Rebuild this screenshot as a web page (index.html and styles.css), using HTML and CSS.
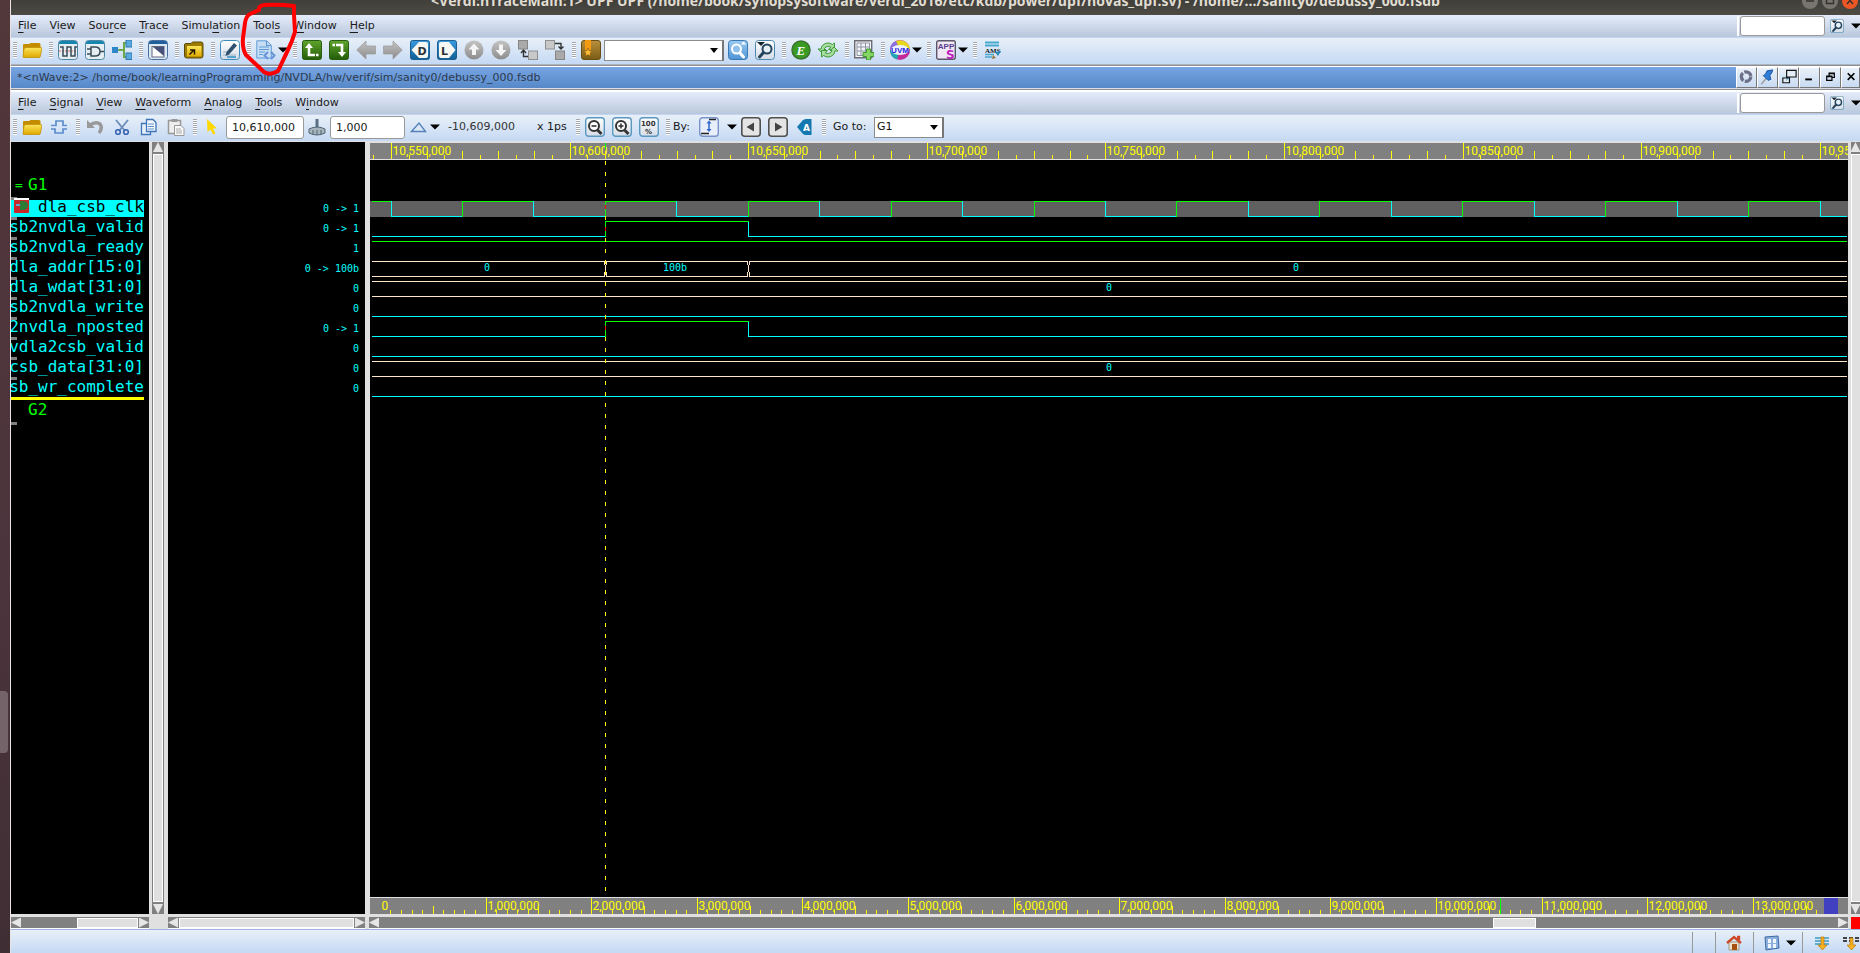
FILE: index.html
```html
<!DOCTYPE html>
<html lang="en">
<head>
<meta charset="utf-8">
<title>Verdi nWave</title>
<link rel="stylesheet" href="styles.css">
</head>
<body>
<svg class="defs" aria-hidden="true">
  <defs>
    <linearGradient id="gold" x1="0" y1="0" x2="0" y2="1"><stop offset="0" stop-color="#fbe65a"/><stop offset="1" stop-color="#e0a800"/></linearGradient>
    <linearGradient id="gray" x1="0" y1="0" x2="0" y2="1"><stop offset="0" stop-color="#c4c4c4"/><stop offset="1" stop-color="#8c8c8c"/></linearGradient>
    <linearGradient id="green" x1="0" y1="0" x2="0" y2="1"><stop offset="0" stop-color="#5fa52c"/><stop offset="1" stop-color="#245c08"/></linearGradient>
    <linearGradient id="blue" x1="0" y1="0" x2="0" y2="1"><stop offset="0" stop-color="#3a9be0"/><stop offset="1" stop-color="#0f5f94"/></linearGradient>
    <linearGradient id="brown" x1="0" y1="0" x2="0" y2="1"><stop offset="0" stop-color="#b98f3c"/><stop offset="1" stop-color="#7a5c14"/></linearGradient>
    <linearGradient id="pale" x1="0" y1="0" x2="0" y2="1"><stop offset="0" stop-color="#ffffff"/><stop offset="1" stop-color="#d4dce6"/></linearGradient>
    <linearGradient id="sky" x1="0" y1="0" x2="0" y2="1"><stop offset="0" stop-color="#9ccbf2"/><stop offset="1" stop-color="#4f93d6"/></linearGradient>
    <symbol id="folder" viewBox="0 0 20 20"><path d="M1 16V5q0-1 1-1h5l1.500-1H17q1.500 0 1.500 1.500V8H4z" fill="#c48d00"/><path d="M1 17l1-8q.3-1.500 2-1.500h15q1 0 .7 1.200L18.500 16q-.3 1.500-1.500 1.500H2q-1 0-1-.5z" fill="url(#gold)" stroke="#c39208" stroke-width=".8"/></symbol>
    <symbol id="lens" viewBox="0 0 20 20"><rect x=".5" y=".5" width="19" height="19" rx="3" fill="url(#pale)" stroke="#4b87ae"/><path d="M2 2h8L6 6z" fill="#14222e"/><circle cx="12" cy="9" r="4.500" fill="#e6f0f6" stroke="#24435c" stroke-width="2"/><path d="M8.500 12.500L4.500 17" stroke="#24435c" stroke-width="3" stroke-linecap="round"/></symbol>
    <symbol id="drop" viewBox="0 0 10 6"><path d="M0 .5h10L5 5.500z" fill="#000"/></symbol>
  </defs>
</svg>

<aside class="dock"><span class="dock-item"></span></aside>
<div class="window">
  <header class="os-title">
    <h1>&lt;Verdi:nTraceMain:1&gt; UPF UPF (/home/book/synopsysoftware/verdi_2016/etc/kdb/power/upf/novas_upf.sv) - /home/.../sanity0/debussy_000.fsdb</h1>
    <div class="os-buttons">
      <button aria-label="Minimize"><svg viewBox="0 0 16 16"><path d="M4 8h8"/></svg></button>
      <button aria-label="Maximize"><svg viewBox="0 0 16 16"><path d="M4.500 4.500h7v6h-7z"/></svg></button>
      <button aria-label="Close" class="close"><svg viewBox="0 0 16 16"><path d="M5 4l6 7M11 4l-6 7"/></svg></button>
    </div>
  </header>

  <nav class="menubar">
    <button><u>F</u>ile</button><button>V<u>i</u>ew</button><button>Sou<u>r</u>ce</button><button><u>T</u>race</button><button>Simul<u>a</u>tion</button><button>Tool<u>s</u></button><button><u>W</u>indow</button><button><u>H</u>elp</button>
    <div class="search"><input type="text" aria-label="Find command"><button aria-label="Find"><svg width="14" height="14"><use href="#lens"/></svg></button><button aria-label="Find options" class="more"><svg width="10" height="6"><use href="#drop"/></svg></button></div>
  </nav>

  <div class="toolbar">
    <i class="grip"></i>
    <button class="tool" aria-label="Open"><svg viewBox="0 0 20 20"><use href="#folder"/></svg></button>
    <i class="grip"></i>
    <button class="tool" aria-label="New waveform"><svg viewBox="0 0 20 20"><rect x=".5" y=".5" width="19" height="19" rx="3" fill="#e6eef2" stroke="#4f87a3"/><path d="M1 4V3q0-2 2-2h14q2 0 2 2v1z" fill="#1686b0"/><path d="M1 11h18" stroke="#e06a5a" stroke-dasharray="2 1"/><path d="M2 7h3v9h4V7h4v9h4V7h2" fill="none" stroke="#3a4c58" stroke-width="1.500"/></svg></button>
    <button class="tool" aria-label="New schematic"><svg viewBox="0 0 20 20"><rect x=".5" y=".5" width="19" height="19" rx="3" fill="#e6eef2" stroke="#4f87a3"/><path d="M1 4V3q0-2 2-2h14q2 0 2 2v1z" fill="#1686b0"/><path d="M6 7h4q5 0 5 4.500T10 16H6zM2 9h4M2 14h4M15 11.500h4" fill="none" stroke="#3a4c58" stroke-width="1.500"/></svg></button>
    <button class="tool" aria-label="Hierarchy"><svg viewBox="0 0 20 20"><path d="M4 10h7M16 3h-4v14h4" fill="none" stroke="#6aa84a" stroke-width="2"/><rect x="0" y="7" width="6" height="6" fill="#2f86c8"/><rect x="14" y="0" width="6" height="7" fill="#5aa9de" stroke="#2f77ae"/><rect x="14" y="13" width="6" height="6.500" fill="#5aa9de" stroke="#2f77ae"/></svg></button>
    <i class="grip"></i>
    <button class="tool" aria-label="Source window"><svg viewBox="0 0 20 20"><rect x=".5" y=".5" width="19" height="19" rx="3" fill="#dce8f4" stroke="#4a6f9c"/><path d="M1 4V3q0-2 2-2h14q2 0 2 2v1z" fill="#1f5f9c"/><rect x="4" y="6.500" width="12" height="10.500" fill="#fff" stroke="#60687c"/><path d="M5 7h11v9z" fill="#46507a"/></svg></button>
    <i class="grip"></i>
    <button class="tool" aria-label="Open session"><svg viewBox="0 0 20 20"><path d="M.5 16V5q0-1.500 1.500-1.500h5L8.500 2H17q2 0 2 2v12q0 2-2 2H3q-2.500 0-2.500-2z" fill="#9c7c00" stroke="#5c4a10"/><path d="M3 6h14.500v10.500H3z" fill="url(#gold)"/><path d="M5.500 14.500l4-4M6 10h4.500v4.500" fill="none" stroke="#201800" stroke-width="1.500"/></svg></button>
    <i class="grip"></i>
    <button class="tool" aria-label="Edit source"><svg viewBox="0 0 20 20"><rect x=".5" y=".5" width="19" height="19" rx="3" fill="url(#pale)" stroke="#3e8cba"/><path d="M3 15h13M3 12h5" stroke="#96b4c8"/><path d="M14 3l3 2.500L9 14.500 5.500 16 6.500 12z" fill="#2f4f6c"/><path d="M7 17h9" stroke="#2b8fc4" stroke-width="1.500"/></svg></button>
    <i class="grip"></i>
    <span class="split"><button class="tool" aria-label="Source code"><svg viewBox="0 0 20 20"><path d="M.8.8h10l4.500 4.500V18H.8z" fill="#c8def4" stroke="#5e9bd6"/><path d="M10.500 1v4.500H15M3 7h10M3 9.500h10M3 12h6M3 14.500h4" fill="none" stroke="#5e9bd6" stroke-width="1.200"/><path d="M12 12l-3.500 3.500L12 19M15 12l3.500 3.500L15 19" fill="none" stroke="#6794d8" stroke-width="2"/></svg></button><button class="arrow" aria-label="Source code options"><svg width="10" height="6"><use href="#drop"/></svg></button></span>
    <i class="grip"></i>
    <button class="tool" aria-label="Scope up"><svg viewBox="0 0 20 20"><rect x=".5" y=".5" width="19" height="19" rx="2" fill="url(#green)" stroke="#285c10"/><path d="M7 7v8h6" fill="none" stroke="#fff" stroke-width="2.600"/><path d="M3 8l4-5 4 5zM14 13.700h2.500v2.600H14z" fill="#fff"/></svg></button>
    <button class="tool" aria-label="Scope down"><svg viewBox="0 0 20 20"><rect x=".5" y=".5" width="19" height="19" rx="2" fill="url(#green)" stroke="#285c10"/><path d="M7 5h6v8" fill="none" stroke="#fff" stroke-width="2.600"/><path d="M9 12h8l-4 5zM3.500 3.700H6v2.600H3.500z" fill="#fff"/></svg></button>
    <button class="tool" aria-label="Back"><svg viewBox="0 0 20 20"><path d="M.7 10L10 1v5h9.500v8H10v5z" fill="url(#gray)" stroke="#999" stroke-width=".7"/></svg></button>
    <button class="tool" aria-label="Forward"><svg viewBox="0 0 20 20"><path d="M19.300 10L10 1v5H.5v8H10v5z" fill="url(#gray)" stroke="#999" stroke-width=".7"/></svg></button>
    <button class="tool" aria-label="Driver"><svg viewBox="0 0 20 20"><rect x=".5" y=".5" width="19" height="19" rx="2" fill="url(#blue)" stroke="#1c5e90"/><path d="M1.500 10L9 2h7q2 0 2 2v12q0 2-2 2H9z" fill="#f6f6f2"/><text x="7.500" y="14.500" class="glyph dark">D</text></svg></button>
    <button class="tool" aria-label="Load"><svg viewBox="0 0 20 20"><rect x=".5" y=".5" width="19" height="19" rx="2" fill="url(#blue)" stroke="#1c5e90"/><path d="M18.500 10L12 2H4Q2 2 2 4v12q0 2 2 2h8z" fill="#f6f6f2"/><text x="4" y="14.500" class="glyph dark">L</text></svg></button>
    <button class="tool" aria-label="Previous"><svg viewBox="0 0 20 20"><circle cx="10" cy="10" r="9.500" fill="url(#gray)"/><path d="M10 3.500l5.500 6H12V15H8V9.500H4.500z" fill="#f4f4f4"/></svg></button>
    <button class="tool" aria-label="Next"><svg viewBox="0 0 20 20"><circle cx="10" cy="10" r="9.500" fill="url(#gray)"/><path d="M10 16l5.500-6H12V4.500H8V10H4.500z" fill="#f4f4f4"/></svg></button>
    <button class="tool" aria-label="Fan in"><svg viewBox="0 0 20 20"><rect x=".5" y=".5" width="9" height="8.500" fill="#aaa" stroke="#858585"/><rect x="10.500" y="11" width="9" height="8.500" fill="#c8c8c8" stroke="#909090"/><path d="M10 16.500H5.500V11M3 13l2.500-3L8 13" fill="none" stroke="#333" stroke-width="1.400"/></svg></button>
    <button class="tool" aria-label="Fan out"><svg viewBox="0 0 20 20"><rect x=".5" y=".5" width="9" height="8.500" fill="#c8c8c8" stroke="#909090"/><rect x="10.500" y="11" width="9" height="8.500" fill="#aaa" stroke="#858585"/><path d="M10 3.500h6V9M13.500 6.500L16 9l2.500-2.500" fill="none" stroke="#333" stroke-width="1.400"/></svg></button>
    <i class="grip"></i>
    <button class="tool" aria-label="Bookmark"><svg viewBox="0 0 20 20"><rect x=".5" y=".5" width="19" height="19" rx="2.500" fill="url(#brown)" stroke="#684e14"/><path d="M4 0h6v10H4z" fill="#f39a12"/><path d="M7 8l1.300 2.800 3 .3-2.200 2.100.6 3L7 14.700l-2.700 1.500.6-3-2.200-2.100 3-.3z" fill="#ffbd38" stroke="#7a5008" stroke-width=".6"/></svg></button>
    <span class="combo wide"><select aria-label="Find text"><option></option></select></span>
    <button class="tool" aria-label="Search"><svg viewBox="0 0 20 20"><rect x=".5" y=".5" width="19" height="19" rx="3" fill="url(#sky)" stroke="#3a78b4"/><circle cx="8.500" cy="9" r="4.500" fill="#8fc0ec" stroke="#fff" stroke-width="2"/><path d="M12 13l3.500 4" stroke="#fff" stroke-width="3" stroke-linecap="round"/><path d="M13 4.500l2.500-3L18 4.500z" fill="#fff"/></svg></button>
    <button class="tool" aria-label="Search options"><svg viewBox="0 0 20 20"><use href="#lens"/></svg></button>
    <i class="grip"></i>
    <button class="tool" aria-label="Evaluate"><svg viewBox="0 0 20 20"><circle cx="10" cy="10" r="9" fill="#3b9a22" stroke="#3b7230" stroke-width="1.500"/><text x="5.500" y="15" class="glyph serif">E</text></svg></button>
    <button class="tool" aria-label="Reload"><svg viewBox="0 0 20 20"><path d="M3 9a7 6.500 0 0 1 11.500-4.500L16.500 3v6.500h-6L12.700 7A4.500 4 0 0 0 6 9.500H8L4 13 0 9z" fill="#a8dca0" stroke="#3f9a38"/><path d="M17 11a7 6.500 0 0 1-11.500 4.500L3.500 17v-6.500h6L7.300 13a4.500 4 0 0 0 6.700-2.500h-2L16 7l4 4z" fill="#a8dca0" stroke="#3f9a38"/></svg></button>
    <i class="grip"></i>
    <button class="tool" aria-label="Add table"><svg viewBox="0 0 20 20"><path d="M.7.7h17v17H.7z" fill="#f4f4f6" stroke="#6c6c74" stroke-width="1.400"/><path d="M3 3h12.500v12.500H3zM7 3v12M11.500 3v12M3 7h12M3 11h12" fill="none" stroke="#8c94a4"/><path d="M12.500 9h4v3.500H20v4h-3.500V20h-4v-3.500H9v-4h3.500z" fill="#86d462" stroke="#3c9a30"/></svg></button>
    <i class="grip"></i>
    <span class="split"><button class="tool" aria-label="UVM"><svg viewBox="0 0 20 20"><circle cx="10" cy="10" r="10" fill="#c42a9a"/><path d="M0 10A10 10 0 0 1 6 1l4 9z" fill="#8c70e0"/><path d="M6 1a10 10 0 0 1 14 8L10 10z" fill="#e6d81c"/><path d="M0 10a10 10 0 0 0 7 9.500L10 10z" fill="#20a8b0"/><ellipse cx="10" cy="10" rx="9" ry="5" fill="#eef0ff"/><text x="10" y="13" text-anchor="middle" class="glyph uvm">UVM</text></svg></button><button class="arrow" aria-label="UVM options"><svg width="10" height="6"><use href="#drop"/></svg></button></span>
    <i class="grip"></i>
    <span class="split"><button class="tool" aria-label="Apps"><svg viewBox="0 0 20 20"><rect x=".7" y=".7" width="18.600" height="18.600" rx="2" fill="#eee8f4" stroke="#5c5468" stroke-width="1.400"/><text x="10" y="8.500" text-anchor="middle" class="glyph apps">APP</text><text x="10" y="18.500" class="glyph s">S</text></svg></button><button class="arrow" aria-label="Apps options"><svg width="10" height="6"><use href="#drop"/></svg></button></span>
    <i class="grip"></i>
    <button class="tool" aria-label="AMS"><svg viewBox="0 0 20 20"><path d="M3 2.500h14M3 5.500h14" stroke="#49a8d0" stroke-width="2"/><path d="M3 14.500h9M3 17h7" stroke="#49a8d0" stroke-width="1.500"/><text x="3" y="12.500" class="glyph ams">AMS</text><path d="M13 12l6-1-3 5z" fill="#2a88b8"/><path d="M11 15l3 3-4 1z" fill="#a07038"/></svg></button>
  </div>

  <div class="sub-title">
    <h2>*&lt;nWave:2&gt; /home/book/learningProgramming/NVDLA/hw/verif/sim/sanity0/debussy_000.fsdb</h2>
    <div class="sub-buttons">
      <button aria-label="Sync"><svg viewBox="0 0 20 20"><circle cx="9" cy="9" r="5" fill="none" stroke="#6c7088" stroke-width="3.500" stroke-dasharray="9 1.500"/></svg></button>
      <button aria-label="Pin"><svg viewBox="0 0 20 20"><path d="M3 17l5-6" stroke="#999" stroke-width="1.500"/><path d="M9 3l6-1-1 3-2 3 1 4-3 1-5-5 2-1z" fill="#2f7cd8" stroke="#1a54a0"/></svg></button>
      <button aria-label="Undock"><svg viewBox="0 0 20 20"><path d="M3 8h9v8H3z" fill="#c4e0f4"/><path d="M7.500 2.500h10v7h-10zM3.500 10.500h7v5h-7z" fill="#e4edf6" stroke="#111" stroke-width="1.200"/><path d="M7 13l3-3" stroke="#2080c0"/></svg></button>
      <button aria-label="Minimize window"><svg viewBox="0 0 20 20"><path d="M5 12h7" stroke="#000" stroke-width="2"/></svg></button>
      <button aria-label="Restore window"><svg viewBox="0 0 20 20"><path d="M8 8V5.500h5.500V10H11M5.500 8.500H11V13H5.500zM8 6h6M5.500 9H11" fill="none" stroke="#000" stroke-width="1.300"/></svg></button>
      <button aria-label="Close window"><svg viewBox="0 0 20 20"><path d="M5.500 5.500l7 7M12.500 5.500l-7 7" stroke="#000" stroke-width="1.700"/></svg></button>
    </div>
  </div>

  <nav class="menubar">
    <button><u>F</u>ile</button><button><u>S</u>ignal</button><button><u>V</u>iew</button><button><u>W</u>aveform</button><button><u>A</u>nalog</button><button><u>T</u>ools</button><button>W<u>i</u>ndow</button>
    <div class="search"><input type="text" aria-label="Find wave command"><button aria-label="Find"><svg width="14" height="14"><use href="#lens"/></svg></button><button aria-label="Find options" class="more"><svg width="10" height="6"><use href="#drop"/></svg></button></div>
  </nav>

  <div class="toolbar wave-tools">
    <i class="grip"></i>
    <button class="tool" aria-label="Open"><svg viewBox="0 0 20 20"><use href="#folder"/></svg></button>
    <button class="tool" aria-label="Get signals"><svg viewBox="0 0 20 20"><path d="M2 8.500h5V4h7v4.500h4M2 12h4v4h8v-4h4" fill="none" stroke="#5c8ccc" stroke-width="1.700"/><path d="M2 10h16" fill="none" stroke="#d4e4f8"/></svg></button>
    <i class="grip"></i>
    <button class="tool" aria-label="Undo"><svg viewBox="0 0 20 20"><path d="M5 8q6-4 10-1 3 4-1 9" fill="none" stroke="#999" stroke-width="3.500"/><path d="M2 3v8h8z" fill="#999"/></svg></button>
    <button class="tool" aria-label="Cut"><svg viewBox="0 0 20 20" fill="none"><path d="M4 3l9 11M16 3L7 14" stroke="#6a8cb8" stroke-width="1.800"/><circle cx="6" cy="15" r="2.300" stroke="#3864b0" stroke-width="1.600"/><circle cx="14" cy="15" r="2.300" stroke="#3864b0" stroke-width="1.600"/></svg></button>
    <button class="tool" aria-label="Copy"><svg viewBox="0 0 20 20"><path d="M2.500 6.500h9v11h-9z" fill="#e8f1fa" stroke="#3e74b8" stroke-width="1.300"/><path d="M7.500 2.500H14l3 3v9H7.500z" fill="#f4f8fc" stroke="#3e74b8" stroke-width="1.300"/><path d="M9 7h6M9 9.500h6M9 12h6" stroke="#5c90cc"/></svg></button>
    <button class="tool" aria-label="Paste"><svg viewBox="0 0 20 20"><path d="M2.500 3.500h12v13h-12z" fill="#eee" stroke="#999" stroke-width="1.500"/><path d="M5.500 2h6v3h-6z" fill="#999"/><path d="M8.500 8.500H15l3 3v7H8.500z" fill="#fafafa" stroke="#999"/><path d="M10 12h5M10 14h6M10 16h6" stroke="#aaa"/></svg></button>
    <i class="grip"></i>
    <button class="tool" aria-label="Select"><svg viewBox="0 0 20 20"><path d="M5 2l10 9.500h-4l2.500 5-2.500 1-2.500-5L5.500 15z" fill="#ffd800"/></svg></button>
    <input class="field" type="text" aria-label="Cursor time" value="10,610,000">
    <button class="tool key" aria-label="Marker"><svg viewBox="0 0 20 20"><path d="M10 2v9" stroke="#5a7082" stroke-width="3"/><path d="M2 12q8-4 16 0v4q-8 4-16 0z" fill="#a8b4bc" stroke="#506474"/><path d="M6 13v4M10 13v5M14 13v4" stroke="#506474"/></svg></button>
    <input class="field" type="text" aria-label="Marker time" value="1,000">
    <button class="tool tri" aria-label="Delta"><svg viewBox="0 0 20 20"><path d="M3.500 14.500L11 6l6.500 8.500z" fill="#dce8f6" stroke="#5480b8" stroke-width="1.400"/></svg></button>
    <button class="arrow" aria-label="Delta options"><svg width="10" height="6"><use href="#drop"/></svg></button>
    <output class="delta">-10,609,000</output>
    <span class="unit">x 1ps</span>
    <i class="grip"></i>
    <button class="tool" aria-label="Zoom out"><svg viewBox="0 0 20 20"><rect x=".7" y=".7" width="18.600" height="18.600" rx="3" fill="url(#pale)" stroke="#5a98c0" stroke-width="1.400"/><circle cx="9" cy="9" r="5" fill="#fff" stroke="#333" stroke-width="2"/><path d="M6.500 9h5" stroke="#333" stroke-width="1.600"/><path d="M12.500 13l4 4" stroke="#333" stroke-width="3"/></svg></button>
    <button class="tool" aria-label="Zoom in"><svg viewBox="0 0 20 20"><rect x=".7" y=".7" width="18.600" height="18.600" rx="3" fill="url(#pale)" stroke="#5a98c0" stroke-width="1.400"/><circle cx="9" cy="9" r="5" fill="#fff" stroke="#333" stroke-width="2"/><path d="M6.500 9h5M9 6.500v5" stroke="#333" stroke-width="1.600"/><path d="M12.500 13l4 4" stroke="#333" stroke-width="3"/></svg></button>
    <button class="tool" aria-label="Zoom all"><svg viewBox="0 0 20 20"><rect x=".7" y=".7" width="18.600" height="18.600" rx="3" fill="url(#pale)" stroke="#5a98c0" stroke-width="1.400"/><text x="2" y="9" class="glyph small">100</text><text x="6" y="17" class="glyph small">%</text></svg></button>
    <i class="grip by-grip"></i>
    <span class="by">By:</span>
    <button class="tool" aria-label="Search by any edge"><svg viewBox="0 0 20 20"><rect x=".7" y=".7" width="18.600" height="18.600" rx="3" fill="#e8effa" stroke="#7a94c8" stroke-width="1.400"/><path d="M10 2.500h7M2 16.500h8" stroke="#222" stroke-width="1.600"/><path d="M10 5v9" stroke="#2c64d0" stroke-width="1.500"/><path d="M7.500 6.500L10 3.500l2.500 3zM7.500 12l2.500 3 2.500-3z" fill="#2c64d0"/></svg></button>
    <button class="arrow" aria-label="Edge options"><svg width="10" height="6"><use href="#drop"/></svg></button>
    <button class="tool" aria-label="Search backward"><svg viewBox="0 0 20 20"><rect x=".8" y=".8" width="18.400" height="18.400" rx="3" fill="#e4e4e4" stroke="#505050" stroke-width="1.600"/><path d="M5.500 10L13 5.500v9z" fill="#444"/></svg></button>
    <button class="tool" aria-label="Search forward"><svg viewBox="0 0 20 20"><rect x=".8" y=".8" width="18.400" height="18.400" rx="3" fill="#e4e4e4" stroke="#505050" stroke-width="1.600"/><path d="M14.500 10L7 5.500v9z" fill="#444"/></svg></button>
    <button class="tool" aria-label="Annotate"><svg viewBox="0 0 20 20"><path d="M2 10L7.500 3.500Q9 2 11 2h5.500v16H11q-2 0-3.500-1.500z" fill="#1478b0"/><text x="8" y="13.500" class="glyph white">A</text></svg></button>
    <i class="grip"></i>
    <label class="goto" for="group">Go to:</label>
    <span class="combo"><select id="group"><option>G1</option></select></span>
  </div>

  <main class="workspace">
    <section class="names">
      <div class="group"><span class="eq">=</span>G1</div>
      <ul>
        <li class="picked"><svg viewBox="0 0 15 15"><rect width="15" height="15" rx="1" fill="#c8282c"/><path d="M0 0h15v2H0z" fill="#fff"/><path d="M2 7h4" stroke="#4cf" stroke-width="1.500"/><path d="M6 3h4q4 1 4 4.500T10 12H6z" fill="#2c7c38"/></svg>dla_csb_clk</li>
        <li>sb2nvdla_valid</li><li>sb2nvdla_ready</li><li>dla_addr[15:0]</li><li>dla_wdat[31:0]</li><li>sb2nvdla_write</li><li>2nvdla_nposted</li><li>vdla2csb_valid</li><li>csb_data[31:0]</li><li>sb_wr_complete</li>
      </ul>
      <div class="insert"></div>
      <div class="group second">G2</div>
    </section>
    <div class="vscroll first"><i class="up"></i><b></b><i class="down"></i></div>
    <section class="values">
      <ul><li>0 -&gt; 1</li><li>0 -&gt; 1</li><li>1</li><li>0 -&gt; 100b</li><li>0</li><li>0</li><li>0 -&gt; 1</li><li>0</li><li>0</li><li>0</li></ul>
    </section>
    <section class="wave">
      <svg class="ruler" id="ruler"></svg>
      <svg class="plot" id="plot"></svg>
      <svg class="ruler" id="overview"></svg>
    </section>
    <div class="vscroll last"><i class="up"></i><b></b><i class="down"></i></div>
    <div class="hscroll h1"><i class="left"></i><b></b><i class="right"></i></div>
    <div class="hscroll h2"><i class="left"></i><b></b><i class="right"></i></div>
    <div class="hscroll h3"><i class="left"></i><span><b></b></span><i class="right"></i></div>
    <div class="stop"></div>
  </main>

  <footer class="status">
    <span class="cell blank"></span>
    <span class="cell home"><button aria-label="Home"><svg viewBox="0 0 16 16"><path d="M3 7h10v8H3z" fill="#ece0cc" stroke="#998"/><path d="M6 9h5v6H6z" fill="#a85010"/><path d="M1 8l7-6 7 6M11 2h2v3" fill="none" stroke="#cc4a28" stroke-width="2.400"/></svg></button></span>
    <span class="cell layout"><button aria-label="Layout"><svg viewBox="0 0 16 16"><path d="M1 2l13-1 1 12-13 2z" fill="#8cb0dc" stroke="#3c68a4"/><path d="M4 4h3v4H4zM9 4h3v4H9zM4 9h3v4H4zM9 9h3v4H9z" fill="#f0f6fc"/></svg></button><button aria-label="Layout options"><svg class="caret" viewBox="0 0 10 6"><use href="#drop"/></svg></button></span>
    <span class="cell marks"><button aria-label="Next message"><svg viewBox="0 0 16 16"><path d="M1 3h14M1 6h14M1 9h14" stroke="#3c9cc4" stroke-width="1.600"/><path d="M7 2h3v8h3l-4.500 5L4 10h3z" fill="#f6b020" stroke="#b87808" stroke-width=".7"/></svg></button><button aria-label="Last message"><svg viewBox="0 0 16 16"><path d="M0 3h16M0 6h16" stroke="#444" stroke-width="2" stroke-dasharray="4 2"/><path d="M7 3h3v7h3l-4.500 5L4 10h3z" fill="#f6b020" stroke="#b87808" stroke-width=".7"/></svg></button></span>
  </footer>
</div>
<svg class="ink" viewBox="0 0 60 76" aria-hidden="true"><path d="M24 5Q38 4 54 6L54 15 55 32Q52 42 47 52L38 71Q30 76 24 72L6 55Q2 48 3 38L5 23Q6 16 10 14L19 10Q18 6 24 5"/></svg>
<script src="app.js"></script>
</body>
</html>
```
FILE: styles.css
```css
* { box-sizing: border-box; }
body { margin: 0; height: 100vh; display: flex; overflow: hidden; background: #e0e0e0; color: #1a1a1a; font: 11px/14px "DejaVu Sans", sans-serif; }
button, input, select { font: inherit; color: inherit; border: 0; padding: 0; margin: 0; background: none; }
ul { list-style: none; margin: 0; padding: 0; }
h1, h2 { margin: 0; font-size: inherit; font-weight: inherit; white-space: nowrap; }
.defs { position: absolute; width: 0; height: 0; }

.dock { flex: none; width: 10px; background: linear-gradient(#52373b, #4c343c 60%, #3f2e34); display: flex; flex-direction: column; }
.dock-item { width: 8px; height: 62px; margin-top: 691px; background: #75636a; border-radius: 0 4px 4px 0; }
.window { flex: 1; min-width: 0; display: flex; flex-direction: column; border-left: 1px solid #e8e4e4; }

.os-title { flex: none; height: 15px; background: linear-gradient(#403f3a, #4c4a43); display: flex; justify-content: center; position: relative; color: #e0ddd2; overflow: hidden; }
.os-title h1 { font: bold 14px/15px "Open Sans", sans-serif; margin-top: -7px; }
.os-buttons { position: absolute; right: 2px; top: -7px; display: flex; gap: 4px; }
.os-buttons button { width: 16px; height: 16px; border-radius: 8px; background: #77756d; }
.os-buttons .close { background: #ea5724; }
.os-buttons svg { display: block; fill: none; stroke: #33322e; stroke-width: 1.500; }

.menubar { flex: none; height: 22px; padding-left: 7px; display: flex; align-items: center; gap: 13px; background: linear-gradient(#e4ecfb, #b9c7db); }
.menubar u { text-underline-offset: 3px; }
.search { margin-left: auto; display: flex; align-items: center; gap: 5px; border-left: 2px solid #fff; padding-left: 1px; }
.search input { width: 85px; height: 20px; background: #fff; border: 1px solid #999; border-radius: 3px; }
.search svg { display: block; }
.search .more { width: 9px; margin-left: 2px; overflow: hidden; }

.toolbar { flex: none; height: 30px; padding: 0 0 5px 2px; display: flex; align-items: center; background: linear-gradient(#e8f0f8, #c5d9f4 26px, #8f8f8f 27px, #8f8f8f 28px, #fff 28px); border-top: 1px solid #c4d4f0; }
.grip { flex: none; width: 4px; height: 16px; margin-right: 5px; background: repeating-linear-gradient(#a4a8ae 0 1px, #fff 1px 2px); }
.tool { flex: none; width: 20px; height: 20px; margin-right: 7px; }
.tool svg { display: block; width: 20px; height: 20px; }
.split { display: flex; align-items: center; margin-right: 5px; }
.split .tool { margin-right: 2px; }
.arrow { width: 10px; }
.arrow svg { display: block; }
.combo { flex: none; width: 70px; height: 21px; border: 1px solid #8c8c8c; border-right: 2px solid #777; background: #fff; position: relative; }
.combo::after { content: ""; position: absolute; right: 4px; top: 7px; border: 4px solid transparent; border-top: 5px solid #000; border-bottom: 0; }
.combo select { width: 100%; height: 100%; appearance: none; padding-left: 2px; color: #111; }
.combo.wide { width: 120px; margin: 0 4px 0 -4px; }

.glyph { font: bold 11px "DejaVu Sans", sans-serif; }
.dark { fill: #2a3238; }
.serif { font: italic bold 13px "Liberation Serif", serif; fill: #fff; }
.uvm { font: bold 8px "Liberation Sans", sans-serif; fill: #2424e0; }
.apps { font: bold 8px "Liberation Sans", sans-serif; fill: #5c3c8c; }
.s { font-size: 12px; fill: #c01cc0; }
.ams { font: bold 7px "Liberation Serif", serif; fill: #102028; }
.small { font-size: 7px; fill: #333; }
.white { font-size: 9px; fill: #fff; }

.sub-title { flex: none; height: 25px; display: flex; align-items: flex-start; justify-content: space-between; background: linear-gradient(#78a5e4, #5688c8 21px, #d8dce4 21px, #d8dce4 22px, #8f8f8f 22px, #8f8f8f 23px, #fff 23px); color: #2c3a4c; }
.sub-title h2 { padding-left: 6px; line-height: 21px; }
.sub-buttons { display: flex; }
.sub-buttons button { width: 21px; height: 21px; background: linear-gradient(#eaf1f9, #c8daf2); border: 1px solid #fff; border-right: 1px solid #777; border-bottom: 1px solid #777; }
.sub-buttons button:last-child { width: 19px; }
.sub-buttons svg { display: block; width: 20px; height: 19px; }

.wave-tools { height: 27px; padding-bottom: 2px; background: linear-gradient(#e8f0f8, #c5d9f4); }
.field { width: 78px; height: 23px; margin: 0 3px 0 -3px; padding: 0 5px; background: #fff; border: 1px solid #999; border-radius: 3px; }
.key + .field { width: 75px; }
.key { margin-right: 6px; }
.tri { margin-right: 2px; }
.delta { margin-left: 4px; width: 89px; color: #333; }
.unit { width: 39px; }
.by-grip { margin-right: 3px; }
.by { width: 26px; }
.wave-tools .arrow { margin-right: 4px; }
.by + .tool { margin-right: 8px; }
.goto { width: 43px; padding-left: 2px; white-space: nowrap; }

.workspace { flex: 1; min-height: 0; padding-top: 1px; display: grid; grid-template-columns: 138px 19px 197px minmax(0, 1fr) 12px; grid-template-rows: minmax(0, 1fr) 12px; row-gap: 3px; background: #e0e0e0; }
.names, .values { background: #000; overflow: hidden; }
.names { padding-top: 33px; color: #0ff; font: 16px/20px "DejaVu Sans Mono", monospace; }
.group { position: relative; height: 20px; margin-bottom: 2px; padding-left: 17px; color: #0f0; }
.eq { position: absolute; left: 4px; font-size: 13px; }
.names li { position: relative; height: 20px; margin-right: 5px; display: flex; justify-content: flex-end; white-space: nowrap; }
.names li::before, .second::after { content: ""; position: absolute; left: 0; top: 0; width: 6px; height: 3px; background: #808080; }
.names .picked { color: #000; background: linear-gradient(#000 3px, #0ff 3px); }
.picked svg { position: absolute; left: 3px; top: 1px; width: 15px; height: 15px; }
.insert { width: 133px; height: 3px; background: #ff0; }
.second::after { top: 22px; }
.values { padding: 57px 6px 0 0; color: #0ff; font: 10px/20px "DejaVu Sans Mono", monospace; text-align: right; }

.wave { margin-left: 5px; display: flex; flex-direction: column; background: #000; border-top: 1px solid #e0e0e0; overflow: hidden; }
.ruler { flex: none; display: block; width: 100%; height: 17px; background: #808080; border-bottom: 1px solid #e0e0e0; overflow: hidden; }
#overview { border-bottom: 0; border-top: 1px solid #e0e0e0; }
.plot { flex: 1; min-height: 0; display: block; width: 100%; }
.ruler text { font: 12px Roboto, sans-serif; fill: #ff0; }
.plot text { font: 10px "DejaVu Sans Mono", monospace; fill: #0ff; }

.vscroll { display: flex; flex-direction: column; align-items: center; background: #808080; width: 12px; }
.first { margin-left: 3px; }
.last { margin-left: 3px; width: 9px; overflow: hidden; }
.vscroll b { flex: 1; width: 10px; margin: 2px 0; background: #e0e0e0; border: 1px solid #fff; }
.vscroll i, .hscroll i { flex: none; width: 10px; height: 10px; background: #e6e6e6; }
.up { clip-path: polygon(50% 0, 100% 100%, 0 100%); }
.down { clip-path: polygon(0 0, 100% 0, 50% 100%); }
.left { clip-path: polygon(0 50%, 100% 0, 100% 100%); }
.right { clip-path: polygon(0 0, 100% 50%, 0 100%); }
.hscroll { display: flex; align-items: center; background: #808080; border-bottom: 1px solid #fff; }
.hscroll b { display: block; height: 10px; background: #e0e0e0; border: 1px solid #fff; }
.h1 b { width: 61px; margin: 0 1px 0 auto; }
.h2 { grid-column: 3; }
.h2 b { flex: 1; margin: 0 1px; }
.h3 { margin-left: 4px; }
.h3 span { flex: 1; padding-left: 75.3%; }
.h3 b { width: 43px; }
.stop { margin-left: 3px; background: #f00; }

.status { flex: none; height: 24px; display: flex; justify-content: flex-end; align-items: stretch; padding-top: 2px; background: linear-gradient(#e8f0f8, #c5d9f4); border-top: 1px solid #9cb4e4; }
.cell { display: flex; align-items: center; border-left: 1px solid #999; }
.cell svg { display: block; width: 16px; height: 16px; }
.cell .caret { width: 10px; height: 6px; }
.blank { width: 23px; }
.home { width: 38px; padding-left: 10px; }
.layout { width: 49px; padding-left: 10px; gap: 6px; }
.marks { width: 58px; padding-left: 11px; gap: 13px; }

.ink { position: absolute; left: 240px; top: 0; width: 60px; height: 76px; fill: none; stroke: #f00; stroke-width: 4; stroke-linejoin: round; pointer-events: none; }
```
FILE: app.js
```js
const NS = 'http://www.w3.org/2000/svg';
const add = (svg, tag, attrs, text) => {
  const el = document.createElementNS(NS, tag);
  for (const key in attrs) el.setAttribute(key, attrs[key]);
  if (text) el.textContent = text;
  svg.appendChild(el);
};
const line = (svg, d, color, extra) =>
  add(svg, 'path', Object.assign({ d, fill: 'none', stroke: color, 'shape-rendering': 'crispEdges' }, extra));
const GREEN = '#0f0', CYAN = '#0ff', BUS = '#ffe4c8', YELLOW = '#ff0';

function drawRuler(svg, origin, step, start, unit) {
  const width = svg.clientWidth;
  for (let i = -10; origin + i * step / 10 < width; i++) {
    const x = Math.floor(origin + i * step / 10) + 0.5;
    if (x < 0) continue;
    const kind = ((i % 10) + 10) % 10;
    const medium = unit < 1000000 ? kind % 2 === 0 : kind === 5;
    if (kind || start + i / 10 * unit > 0) {
      line(svg, `M${x} 16V${kind === 0 ? 0 : medium ? 8 : 12}`, YELLOW);
    }
    if (kind === 0) {
      const value = start + i / 10 * unit;
      if (value >= 0) add(svg, 'text', { x: x + 1, y: 12 }, value.toLocaleString('en-US'));
    }
  }
}

function drawPlot(svg) {
  const w = svg.clientWidth, h = svg.clientHeight;
  const cursor = 235.5, end = 378.5, half = 71.45;
  add(svg, 'rect', { x: 0, y: 41, width: w, height: 16, fill: '#606060' });
  line(svg, 'M2 41.5H21.5', GREEN);
  for (let i = 0; 21 + i * half < w; i++) {
    const a = Math.floor(21 + i * half) + 0.5;
    const b = Math.min(Math.floor(21 + (i + 1) * half) + 0.5, w - 1);
    line(svg, i % 2 ? `M${a} 57V41.5H${b}` : `M${a} 41V56.500H${b}`, i % 2 ? GREEN : CYAN);
  }
  for (const low of [76.5, 176.5]) {
    line(svg, `M2 ${low}H${cursor}M${end} ${low - 15}V${low}H${w - 1}`, CYAN);
    line(svg, `M${cursor} ${low}V${low - 15}H${end}`, GREEN);
  }
  line(svg, `M2 81.500H${w - 1}`, GREEN);
  for (const y of [101.5, 116.5, 121.5, 136.5, 201.5, 216.5]) line(svg, `M2 ${y}H${w - 1}`, BUS);
  for (const y of [156.5, 196.5, 236.5]) line(svg, `M2 ${y}H${w - 1}`, CYAN);
  for (const x of [cursor, end]) {
    add(svg, 'rect', { x: x - 1, y: 101, width: 2, height: 16, fill: '#000' });
    line(svg, `M${x - 1} 101V105M${x + 1} 101V105M${x} 105V112M${x - 1} 112V117M${x + 1} 112V117`, BUS);
  }
  line(svg, `M${cursor} 1V${h - 5}`, YELLOW, { 'stroke-dasharray': '4 7' });
  for (const y of [45, 67, 166]) line(svg, `M${cursor} ${y}v4`, '#f00');
  const label = (x, y, t) => add(svg, 'text', { x, y, 'text-anchor': 'middle' }, t);
  label(117, 111, '0'); label(305, 111, '100b'); label('62.650%', 111, '0');
  label('50%', 131, '0'); label('50%', 211, '0');
}

function draw() {
  const ruler = document.getElementById('ruler');
  const plot = document.getElementById('plot');
  const overview = document.getElementById('overview');
  for (const svg of [ruler, plot, overview]) svg.replaceChildren();
  drawRuler(ruler, 21.4, 178.6, 10550000, 50000);
  line(ruler, 'M235.500 0V6', GREEN);
  drawPlot(plot);
  drawRuler(overview, 10.4, 105.6, 0, 1000000);
  line(overview, 'M1130.500 0V16', GREEN);
  add(overview, 'rect', { x: overview.clientWidth - 24, y: 0, width: 14, height: 16, fill: '#4040c0' });
}
draw();
window.addEventListener('resize', draw);
```
